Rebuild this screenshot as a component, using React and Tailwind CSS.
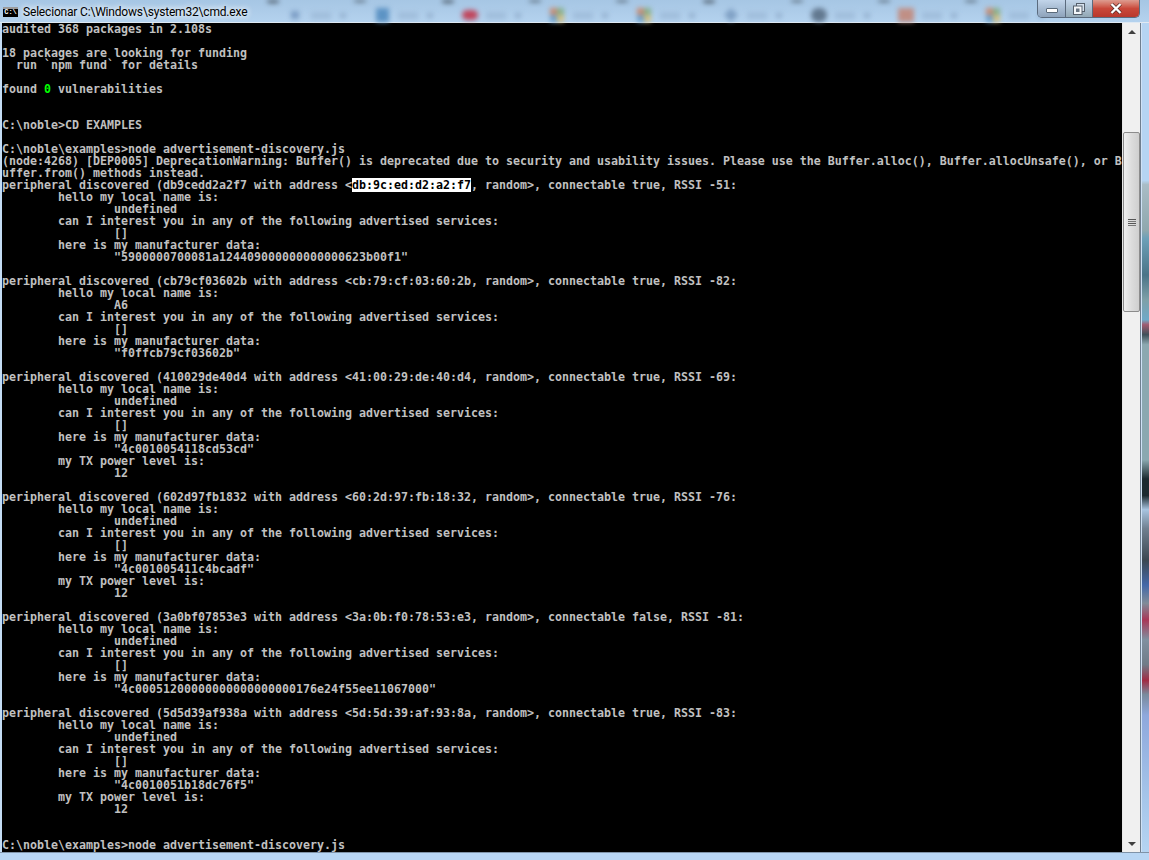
const blocks = [
  { id: "db9cedd2a2f7", addr: "db:9c:ed:d2:a2:f7", conn: "true", rssi: "-51", name: "undefined", data: "5900000700081a124409000000000000623b00f1", tx: false, selected: true },
  { id: "cb79cf03602b", addr: "cb:79:cf:03:60:2b", conn: "true", rssi: "-82", name: "A6", data: "f0ffcb79cf03602b", tx: false },
  { id: "410029de40d4", addr: "41:00:29:de:40:d4", conn: "true", rssi: "-69", name: "undefined", data: "4c0010054118cd53cd", tx: true },
  { id: "602d97fb1832", addr: "60:2d:97:fb:18:32", conn: "true", rssi: "-76", name: "undefined", data: "4c001005411c4bcadf", tx: true },
  { id: "3a0bf07853e3", addr: "3a:0b:f0:78:53:e3", conn: "false", rssi: "-81", name: "undefined", data: "4c00051200000000000000000176e24f55ee11067000", tx: false },
  { id: "5d5d39af938a", addr: "5d:5d:39:af:93:8a", conn: "true", rssi: "-83", name: "undefined", data: "4c0010051b18dc76f5", tx: true },
];

function Line({ children }) {
  return <div className="h-3 whitespace-pre">{children || " "}</div>;
}

function Block({ b }) {
  const tail = `, random>, connectable ${b.conn}, RSSI ${b.rssi}:`;
  return (
    <>
      <Line>
        {`peripheral discovered (${b.id} with address <`}
        {b.selected ? <span className="bg-white text-black">{b.addr}</span> : b.addr}
        {tail}
      </Line>
      <Line>{"        hello my local name is:"}</Line>
      <Line>{`                ${b.name}`}</Line>
      <Line>{"        can I interest you in any of the following advertised services:"}</Line>
      <Line>{"                []"}</Line>
      <Line>{"        here is my manufacturer data:"}</Line>
      <Line>{`                "${b.data}"`}</Line>
      {b.tx && <Line>{"        my TX power level is:"}</Line>}
      {b.tx && <Line>{"                12"}</Line>}
      <Line />
    </>
  );
}

function MultiIcon() {
  return (
    <div className="grid h-[14px] w-[14px] grid-cols-2">
      <div className="bg-[#c88a70]" />
      <div className="bg-[#86b08a]" />
      <div className="bg-[#6ca0cc]" />
      <div className="bg-[#d4c080]" />
    </div>
  );
}

function BlurTab({ icon }) {
  return (
    <div className="flex w-[87.3px] shrink-0 flex-col">
      <div className="h-[3px] w-3 rounded-b-full bg-[#46525e]" />
      <div className="mt-[6px] flex h-[14px] items-center pl-5">
        <div className="flex w-4 justify-center">{icon}</div>
        <div className="ml-[8px] h-[7px] w-[20px] bg-[#a0bddb]" />
        <div className="ml-[9px] h-[5px] w-[6px] bg-[#93b0cf]" />
      </div>
    </div>
  );
}

function Glass() {
  return (
    <div className="absolute inset-0 flex overflow-hidden pl-[267px] blur-[2.5px]">
      <BlurTab icon={<div className="h-[8px] w-[8px] bg-[#7b9cc4]" />} />
      <BlurTab icon={<div className="h-[14px] w-[13px] bg-[#5c93c4]" />} />
      <BlurTab icon={<div className="h-[10px] w-[16px] rounded-full bg-[#c0455c]" />} />
      <BlurTab icon={<MultiIcon />} />
      <BlurTab icon={<MultiIcon />} />
      <BlurTab icon={<div className="h-[10px] w-[10px] rotate-45 bg-[#7fa0c4]" />} />
      <BlurTab icon={<div className="h-[14px] w-[16px] rounded-full bg-[#62788f]" />} />
      <BlurTab icon={<div className="h-[14px] w-[16px] bg-[#c08f85]" />} />
      <BlurTab icon={<MultiIcon />} />
    </div>
  );
}

function CmdIcon() {
  return (
    <div className="mr-[5px] flex h-[10px] w-[15px] items-center justify-center border-t-2 border-[#9a9a9a] bg-black font-['Liberation_Mono',monospace] text-[7px] font-bold leading-none text-white">
      C:\
    </div>
  );
}

function Controls() {
  return (
    <div className="absolute right-[9px] top-0 flex h-[18px] w-[103px] overflow-hidden rounded-b-[5px] border border-t-0 border-[#5b6b7e]">
      <div className="flex w-[28px] items-center justify-center border-r border-[#5b6b7e] bg-gradient-to-b from-[#c2d5ea] to-[#8ea3bb]">
        <div className="mt-[3px] h-[5px] w-[12px] rounded-[1px] border border-[#5a6a7a] bg-white" />
      </div>
      <div className="flex w-[27px] items-center justify-center border-r border-[#5b6b7e] bg-gradient-to-b from-[#c2d5ea] to-[#93a8b5]">
        <svg width="12" height="12" viewBox="0 0 12 12" className="mt-[1px]">
          <rect x="3.5" y="0.5" width="8" height="8" fill="#d7e2ee" stroke="#56606c" />
          <rect x="0.5" y="3" width="8.5" height="8.5" fill="#f3f6f9" stroke="#56606c" />
          <rect x="3" y="5.5" width="3.5" height="3.5" fill="#6b7784" />
        </svg>
      </div>
      <div className="flex flex-1 items-center justify-center bg-gradient-to-b from-[#dd9c90] via-[#c9483a] to-[#b8382c]">
        <svg width="12" height="11" viewBox="0 0 12 11">
          <path d="M1.5 1 L10.5 10 M10.5 1 L1.5 10" stroke="#4a2520" strokeWidth="3.6" />
          <path d="M1.5 1 L10.5 10 M10.5 1 L1.5 10" stroke="#ffffff" strokeWidth="2.4" />
        </svg>
      </div>
    </div>
  );
}

function Scrollbar() {
  return (
    <div className="flex w-[17px] flex-col bg-[#f0f0f0]">
      <div className="flex h-[17px] items-center justify-center">
        <div className="h-0 w-0 border-x-[4px] border-b-[4px] border-x-transparent border-b-[#404040]" />
      </div>
      <div className="mt-[92px] flex h-[180px] items-center justify-center rounded-[2px] border border-[#8c8c8c] bg-gradient-to-r from-[#f0f0f0] via-[#dcdcdc] to-[#cfcfcf]">
        <div className="flex w-[8px] flex-col gap-[1px]">
          <div className="h-px bg-[#555]" />
          <div className="h-px bg-[#777]" />
          <div className="h-px bg-[#555]" />
          <div className="h-px bg-[#777]" />
        </div>
      </div>
      <div className="flex-1" />
      <div className="flex h-[17px] items-center justify-center">
        <div className="h-0 w-0 border-x-[4px] border-t-[4px] border-x-transparent border-t-[#404040]" />
      </div>
    </div>
  );
}

export default function App() {
  return (
    <div className="flex h-[860px] w-[1149px] flex-col overflow-hidden bg-[#b4d3f0]">
      <div className="relative h-[23px] shrink-0 border-b border-[#dfe9f3] bg-gradient-to-b from-[#a6c6e4] to-[#b4d2ee]">
        <Glass />
        <div className="relative flex h-full items-center pl-[3px] pt-[1px]">
          <CmdIcon />
          <span className="font-['Roboto',sans-serif] text-[12px] tracking-[-0.18px] text-black [text-shadow:0_0_6px_#ffffff,0_0_6px_#ffffff]">
            {"Selecionar C:\\Windows\\system32\\cmd.exe"}
          </span>
        </div>
        <Controls />
      </div>
      <div className="flex h-[829px] shrink-0">
        <div className="w-[2px] bg-[#c4dcf4]" />
        <div className="w-[1120px] overflow-hidden bg-black font-['DejaVu_Sans_Mono',monospace] text-[11.63px] font-bold leading-3 text-[#c0c0c0]">
          <Line>audited 368 packages in 2.108s</Line>
          <Line />
          <Line>18 packages are looking for funding</Line>
          <Line>{"  run `npm fund` for details"}</Line>
          <Line />
          <Line>
            found <span className="text-[#00ff00]">0</span> vulnerabilities
          </Line>
          <Line />
          <Line />
          <Line>{"C:\\noble>CD EXAMPLES"}</Line>
          <Line />
          <Line>{"C:\\noble\\examples>node advertisement-discovery.js"}</Line>
          <Line>
            {"(node:4268) [DEP0005] DeprecationWarning: Buffer() is deprecated due to security and usability issues. Please use the Buffer.alloc(), Buffer.allocUnsafe(), or B"}
          </Line>
          <Line>uffer.from() methods instead.</Line>
          {blocks.map((b) => (
            <Block key={b.id} b={b} />
          ))}
          <Line />
          <Line>{"C:\\noble\\examples>node advertisement-discovery.js"}</Line>
        </div>
        <div className="w-px bg-[#e8e8e8]" />
        <Scrollbar />
        <div className="w-px bg-[#6f7f8f]" />
        <div className="w-px bg-[#cfe2f6]" />
        <div className="flex-1 bg-[linear-gradient(to_bottom,#b5d4f2_0%,#b5d4f2_19%,#a9bcc6_19.5%,#8fa8ae_25%,#6da0b8_26%,#4a7488_30.4%,#7ea0a8_33.4%,#6fa9c8_35.8%,#a05a70_36.4%,#40505a_37.6%,#8ca8b0_38.8%,#8aa8b0_52.7%,#1c2a30_55%,#1c2a30_57%,#a8c4e0_58.7%,#708090_61%,#3c4852_64.8%,#4468a8_67.8%,#808c98_70%,#a83858_72%,#8090a0_74.4%,#707c88_77.4%,#a02c44_79.3%,#7a8a9c_81%,#8ea8dc_83.5%,#a6c6ea_93.7%,#b5d4f2_100%)]" />
      </div>
      <div className="flex-1 border-t border-[#7f93a8] bg-[#b8d6f4]" />
    </div>
  );
}
